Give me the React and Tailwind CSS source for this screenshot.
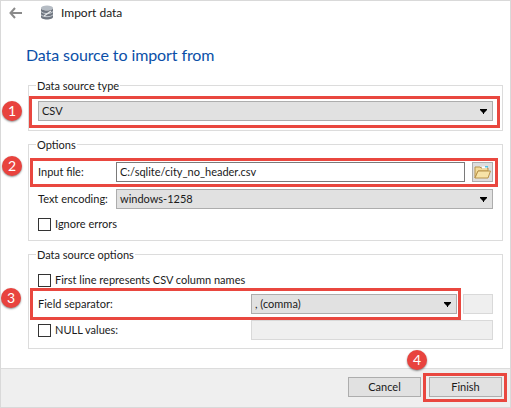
const font = "[font-family:Lato,sans-serif]";

const ComboArrow = () => (
  <svg width="7" height="5" viewBox="0 0 7 5" className="shrink-0">
    <path d="M0 0h7v1L4 4v1H3V4L0 1z" fill="#000" />
  </svg>
);

const Combo = ({ value, className = '' }) => (
  <div className={`flex h-5 items-center justify-between border border-[#adadad] bg-[#e1e1e1] pl-[3px] pr-[5px] ${className}`}>
    <span>{value}</span>
    <ComboArrow />
  </div>
);

const Checkbox = ({ label }) => (
  <label className="flex items-center gap-1">
    <span className="h-[13px] w-[13px] shrink-0 border border-[#333] bg-white" />
    <span>{label}</span>
  </label>
);

const Group = ({ title, className = '', children }) => (
  <div className={`relative ml-[27px] w-[475px] border border-[#dcdcdc] pl-[9px] pr-[9px] ${className}`}>
    <span className="absolute left-[7px] top-[-8px] bg-white px-px leading-[16px]">{title}</span>
    {children}
  </div>
);

// red annotation frames drawn over the dialog
const Highlight = ({ className }) => (
  <div className={`pointer-events-none absolute border-[3px] border-[#e9473f] ${className}`} />
);

const Badge = ({ n, className }) => (
  <div className={`absolute flex h-5 w-5 items-center justify-center rounded-full bg-[#e8433e] text-[14px] leading-none text-white shadow-[0_1px_2px_rgba(0,0,0,0.45)] ${className}`}>
    {n}
  </div>
);

const App = () => {
  return (
    <div className={`relative flex h-[408px] w-[511px] flex-col overflow-hidden border border-[#d9d9d9] bg-white text-[11px] leading-[16px] text-[#1a1a1a] ${font}`}>
      {/* Title row */}
      <div className="flex h-[23px] shrink-0 items-center">
        <svg width="14" height="12" viewBox="0 0 14 12" className="ml-[8px]">
          <path d="M6 1 1.5 6 6 11M2 6h11" fill="none" stroke="#8a8a8a" strokeWidth="2" />
        </svg>
        <svg width="14" height="15" viewBox="0 0 14 15" className="ml-[17px]">
          <ellipse cx="7" cy="3" rx="6" ry="2.5" fill="#b5bcc4" />
          <path d="M1 3v9c0 1.4 2.7 2.5 6 2.5s6-1.100 6-2.500V3c0 1.400-2.700 2.500-6 2.500S1 4.400 1 3z" fill="#6f7680" />
          <path d="M1 6.500c1 1.300 3 2 6 2s5-.7 6-2M1 9.700c1 1.300 3 2 6 2s5-.7 6-2" fill="none" stroke="#c9ced4" strokeWidth="1" />
          <path d="m4 11 7-5" stroke="#e4e6e8" strokeWidth="1.500" />
        </svg>
        <span className="ml-[7px] text-[12px]">Import data</span>
      </div>

      <h1 className="ml-[25px] mt-[20px] h-[22px] shrink-0 text-[16px] font-normal leading-[22px] tracking-[-0.1px] text-[#0b4fa8]">
        Data source to import from
      </h1>

      <Group title="Data source type" className="mt-[19px] h-[46px] pt-[15px]">
        <Combo value="CSV" />
      </Group>

      <Group title="Options" className="mt-[13px] h-[97px] pt-[17px]">
        <div className="grid grid-cols-[78px_1fr] items-center gap-y-[7px]">
          <span>Input file:</span>
          <div className="flex items-center gap-[7px]">
            <div className="flex h-5 flex-1 items-center border border-[#7a7a7a] bg-white pl-[3px]">C:/sqlite/city_no_header.csv</div>
            <div className="flex h-5 w-[21px] items-center justify-center border border-[#adadad] bg-[#dedede]">
              <svg width="17" height="14" viewBox="0 0 17 14">
                <path d="M1 13V2h5l1 1h7v3H4z" fill="#f3dc9a" stroke="#b8924a" />
                <path d="M8 1.500h5v2H8z" fill="#fff" />
                <path d="M11 1h3v1.500h-3z" fill="#4fc3e8" />
                <path d="M1 13 4 6h12.500L14 13z" fill="#f7e3a8" stroke="#b8924a" />
              </svg>
            </div>
          </div>
          <span>Text encoding:</span>
          <Combo value="windows-1258" />
        </div>
        <div className="mt-[7px]">
          <Checkbox label="Ignore errors" />
        </div>
      </Group>

      <Group title="Data source options" className="mt-[13px] h-[95px] pt-[17px]">
        <Checkbox label="First line represents CSV column names" />
        <div className="mt-[6px] flex h-5 items-center">
          <span className="w-[213px] shrink-0">Field separator:</span>
          <Combo value=", (comma)" className="w-[206px]" />
          <div className="ml-[6px] h-5 flex-1 border border-[#d9d9d9] bg-[#efefef]" />
        </div>
        <div className="mt-[6px] flex h-5 items-center">
          <div className="w-[213px] shrink-0">
            <Checkbox label="NULL values:" />
          </div>
          <div className="h-5 flex-1 border border-[#d9d9d9] bg-[#efefef]" />
        </div>
      </Group>

      {/* Footer */}
      <div className="mt-[19px] flex flex-1 items-start justify-end gap-2 border-t border-[#dcdcdc] bg-[#efefef] pr-2 pt-[8px]">
        <button className="h-5 w-[73px] border border-[#adadad] bg-[#e1e1e1]">Cancel</button>
        <button className="h-5 w-[73px] border border-[#adadad] bg-[#e1e1e1]">Finish</button>
      </div>

      <Highlight className="left-[28px] top-[95px] h-[32px] w-[471px]" />
      <Highlight className="left-[29px] top-[157px] h-[29px] w-[468px]" />
      <Highlight className="left-[29px] top-[287px] h-[32px] w-[431px]" />
      <Highlight className="left-[422px] top-[372px] h-[29px] w-[84px]" />
      <Badge n="1" className="left-[1px] top-[100px]" />
      <Badge n="2" className="left-[1px] top-[155px]" />
      <Badge n="3" className="left-[0px] top-[287px]" />
      <Badge n="4" className="left-[406px] top-[349px]" />
    </div>
  );
};

export default App;
